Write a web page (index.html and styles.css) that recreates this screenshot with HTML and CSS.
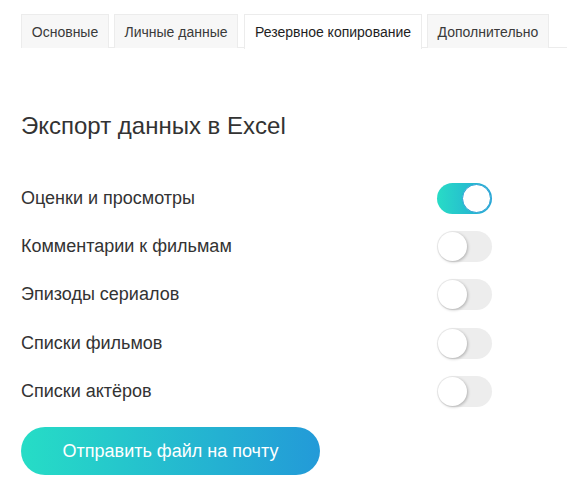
FILE: index.html
```html
<!DOCTYPE html>
<html lang="ru">
<head>
<meta charset="utf-8">
<link rel="stylesheet" href="styles.css">
</head>
<body>
<div class="page">
  <nav class="tabs">
    <div class="tab tab-main">Основные</div>
    <div class="tab tab-personal">Личные данные</div>
    <div class="tab tab-backup active">Резервное копирование</div>
    <div class="tab tab-extra">Дополнительно</div>
  </nav>
  <h2 class="title">Экспорт данных в Excel</h2>
  <div class="list">
    <div class="row"><span class="label">Оценки и просмотры</span><span class="toggle on"><span class="knob"></span></span></div>
    <div class="row"><span class="label">Комментарии к фильмам</span><span class="toggle"><span class="knob"></span></span></div>
    <div class="row"><span class="label">Эпизоды сериалов</span><span class="toggle"><span class="knob"></span></span></div>
    <div class="row"><span class="label">Списки фильмов</span><span class="toggle"><span class="knob"></span></span></div>
    <div class="row"><span class="label">Списки актёров</span><span class="toggle"><span class="knob"></span></span></div>
  </div>
  <button class="send">Отправить файл на почту</button>
</div>
</body>
</html>
```
FILE: styles.css
```css
* { box-sizing: border-box; }
body {
  margin: 0;
  font-family: "Liberation Sans", Arial, sans-serif;
  color: #333;
  background: #fff;
}
.page {
  padding: 14px 0 0 21px;
}
.tabs {
  display: flex;
  gap: 5px;
  border-bottom: 1px solid #ececec;
  height: 34px;
}
.tab {
  height: 34px;
  display: flex;
  align-items: center;
  justify-content: center;
  font-size: 14px;
  color: #3a3a3a;
  background: #f7f7f7;
  border: 1px solid #ececec;
  border-bottom: none;
}
.tab-main { width: 88px; }
.tab-personal { width: 124px; }
.tab-backup { width: 178px; margin-left: 1px; }
.tab-extra { width: 122px; }
.tab.active {
  background: #fff;
  color: #1e1e1e;
  height: 35px;
}
.title {
  margin: 64px 0 0 0;
  font-size: 24px;
  font-weight: normal;
  color: #333;
  line-height: 28px;
}
.list {
  margin-top: 34px;
  width: 471px;
}
.row {
  display: flex;
  align-items: center;
  justify-content: space-between;
  height: 48.3px;
}
.label {
  font-size: 18px;
  color: #333;
}
.toggle {
  width: 55px;
  height: 31px;
  border-radius: 16px;
  background: #ededed;
  position: relative;
  display: block;
}
.toggle .knob {
  position: absolute;
  top: 1px;
  left: 1px;
  width: 29px;
  height: 29px;
  border-radius: 50%;
  background: #fff;
  box-shadow: 1px 1px 3px rgba(0,0,0,0.25);
}
.toggle.on {
  background: linear-gradient(90deg, #28dcc6, #24a6d6);
}
.toggle.on .knob {
  left: auto;
  right: 1px;
  box-shadow: none;
  border: 1px solid #2aa1d4;
}
.send {
  display: block;
  margin-top: 12px;
  width: 299px;
  height: 48px;
  border: none;
  border-radius: 24px;
  background: linear-gradient(90deg, #26ddc6, #239ad8);
  color: #fff;
  font-family: "Liberation Sans", Arial, sans-serif;
  font-size: 18px;
  padding: 0;
}
```
